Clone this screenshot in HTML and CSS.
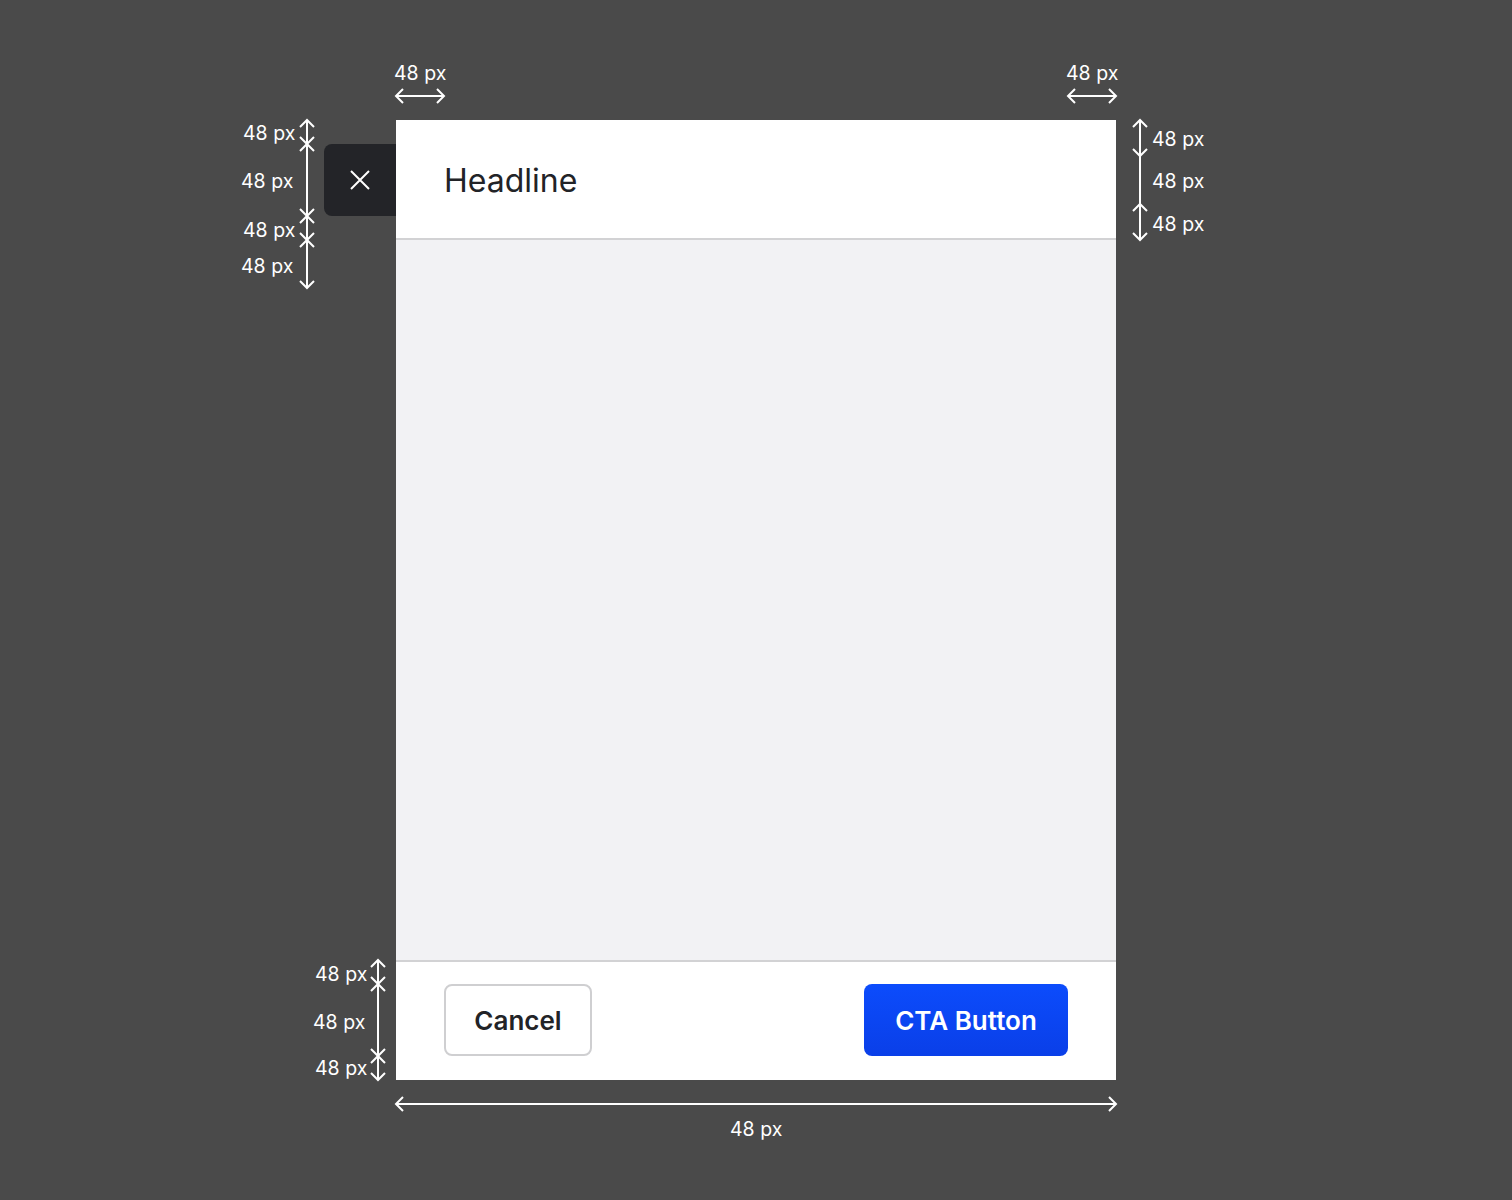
FILE: index.html
```html
<!DOCTYPE html>
<html lang="en">
<head>
    <meta charset="UTF-8">
    <title>Dialog spacing spec</title>
    <link rel="stylesheet" href="styles.css">
</head>
<body>

<div class="canvas">

    <div class="dialog">
        <button class="dialog-close" aria-label="Close">
            <svg width="20" height="20" viewBox="0 0 20 20">
                <path d="M1 1 L19 19 M19 1 L1 19" stroke="#fff" stroke-width="2" fill="none"/>
            </svg>
        </button>
        <div class="dialog-header">
            <h2>Headline</h2>
        </div>
        <div class="dialog-body"></div>
        <div class="dialog-footer">
            <button class="btn btn-secondary">Cancel</button>
            <button class="btn btn-primary">CTA Button</button>
        </div>
    </div>

    <!-- spacing annotations -->
    <svg class="marks" width="1512" height="1200" viewBox="0 0 1512 1200">
        <g stroke="#fff" stroke-width="2" fill="none">
            <!-- top horizontal -->
            <path d="M396 96 H444 M403 89 L396 96 L403 103 M437 89 L444 96 L437 103"/>
            <path d="M1068 96 H1116 M1075 89 L1068 96 L1075 103 M1109 89 L1116 96 L1109 103"/>
            <!-- left vertical -->
            <path d="M307 120 V288"/>
            <path d="M300 127 L307 120 L314 127 M300 137 L307 144 L314 137"/>
            <path d="M300 151 L307 144 L314 151 M300 209 L307 216 L314 209"/>
            <path d="M300 223 L307 216 L314 223 M300 233 L307 240 L314 233"/>
            <path d="M300 247 L307 240 L314 247 M300 281 L307 288 L314 281"/>
            <!-- right vertical -->
            <path d="M1140 120 V240"/>
            <path d="M1133 127 L1140 120 L1147 127 M1133 149 L1140 156 L1147 149"/>
            <path d="M1133 211 L1140 204 L1147 211 M1133 233 L1140 240 L1147 233"/>
            <!-- footer vertical -->
            <path d="M378 960 V1080"/>
            <path d="M371 967 L378 960 L385 967 M371 977 L378 984 L385 977"/>
            <path d="M371 991 L378 984 L385 991 M371 1049 L378 1056 L385 1049"/>
            <path d="M371 1063 L378 1056 L385 1063 M371 1073 L378 1080 L385 1073"/>
            <!-- bottom width -->
            <path d="M396 1104 H1116 M403 1097 L396 1104 L403 1111 M1109 1097 L1116 1104 L1109 1111"/>
        </g>
    </svg>

    <span class="label" style="left:394px; top:61px">48 px</span>
    <span class="label" style="left:1066px; top:61px">48 px</span>

    <span class="label" style="left:243px; top:121px">48 px</span>
    <span class="label" style="left:241px; top:169px">48 px</span>
    <span class="label" style="left:243px; top:218px">48 px</span>
    <span class="label" style="left:241px; top:254px">48 px</span>

    <span class="label" style="left:1152px; top:127px">48 px</span>
    <span class="label" style="left:1152px; top:169px">48 px</span>
    <span class="label" style="left:1152px; top:212px">48 px</span>

    <span class="label" style="left:315px; top:962px">48 px</span>
    <span class="label" style="left:313px; top:1010px">48 px</span>
    <span class="label" style="left:315px; top:1056px">48 px</span>

    <span class="label" style="left:730px; top:1117px">48 px</span>

</div>

</body>
</html>
```

FILE: styles.css
```css
body {
    margin: 0;
    background: #4a4a4a;
    font-family: Inter, "Noto Sans", sans-serif;
}

.canvas {
    position: relative;
    width: 1512px;
    height: 1200px;
    overflow: hidden;
}

.dialog {
    position: relative;
    width: 720px;
    height: 960px;
    margin: 120px 0 0 396px;
    display: flex;
    flex-direction: column;
    background: #fff;
}

.dialog-close {
    position: absolute;
    left: -72px;
    top: 24px;
    width: 72px;
    height: 72px;
    padding: 0;
    border: none;
    border-radius: 8px 0 0 8px;
    background: #232428;
    display: flex;
    align-items: center;
    justify-content: center;
    cursor: pointer;
}

.dialog-header {
    height: 120px;
    box-sizing: border-box;
    padding: 2px 48px 0;
    display: flex;
    align-items: center;
    border-bottom: 2px solid #d2d2d4;
}

.dialog-header h2 {
    margin: 0;
    font-size: 32px;
    font-weight: 400;
    color: #222327;
}

.dialog-body {
    flex: 1;
    background: #f2f2f4;
}

.dialog-footer {
    height: 120px;
    box-sizing: border-box;
    padding: 0 48px 2px;
    display: flex;
    align-items: center;
    justify-content: space-between;
    border-top: 2px solid #d2d2d4;
}

.btn {
    height: 72px;
    box-sizing: border-box;
    border-radius: 8px;
    font-family: Inter, "Noto Sans", sans-serif;
    font-size: 26px;
    font-weight: 600;
    cursor: pointer;
}

.btn-secondary {
    width: 148px;
    background: #fff;
    color: #222327;
    border: 2px solid #cfcfd1;
}

.btn-primary {
    width: 204px;
    border: none;
    color: #fff;
    background: linear-gradient(180deg, #0c4cfc, #0a3fe8);
}

.marks {
    position: absolute;
    left: 0;
    top: 0;
    pointer-events: none;
}

.label {
    position: absolute;
    font-size: 19.5px;
    line-height: 24px;
    color: #fff;
    white-space: nowrap;
}
```
